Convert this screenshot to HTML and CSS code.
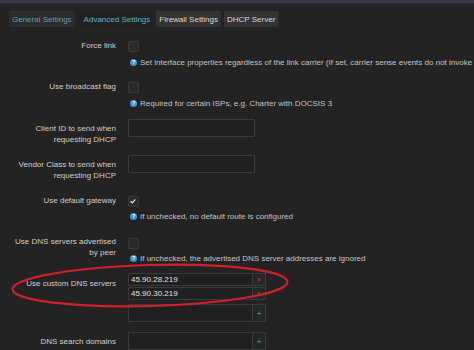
FILE: index.html
```html
<!DOCTYPE html>
<html>
<head>
<meta charset="utf-8">
<link rel="stylesheet" href="styles.css">
</head>
<body>
<div class="topbar"></div>
<div class="tabs">
  <span class="tab tab-general">General Settings</span>
  <span class="tab tab-active">Advanced Settings</span>
  <span class="tab">Firewall Settings</span>
  <span class="tab">DHCP Server</span>
</div>
<div class="form">
  <div class="row r1">
    <div class="label">Force link</div>
    <div class="field">
      <span class="cb"></span>
      <div class="help"><span class="q">?</span>Set interface properties regardless of the link carrier (If set, carrier sense events do not invoke hotplug handlers).</div>
    </div>
  </div>
  <div class="row r2">
    <div class="label">Use broadcast flag</div>
    <div class="field">
      <span class="cb"></span>
      <div class="help"><span class="q">?</span>Required for certain ISPs, e.g. Charter with DOCSIS 3</div>
    </div>
  </div>
  <div class="row r3">
    <div class="label tall">Client ID to send when<br>requesting DHCP</div>
    <div class="field"><div class="input"></div></div>
  </div>
  <div class="row r4">
    <div class="label tall">Vendor Class to send when<br>requesting DHCP</div>
    <div class="field"><div class="input"></div></div>
  </div>
  <div class="row r5">
    <div class="label">Use default gateway</div>
    <div class="field">
      <span class="cb checked"><svg viewBox="0 0 10 10" width="10" height="10"><path d="M2.6 5.2 L4.3 6.8 L7.4 3.4" fill="none" stroke="#e6e6e6" stroke-width="1.2"/></svg></span>
      <div class="help"><span class="q">?</span>If unchecked, no default route is configured</div>
    </div>
  </div>
  <div class="row r6">
    <div class="label">Use DNS servers advertised<br>by peer</div>
    <div class="field">
      <span class="cb cb2"></span>
      <div class="help"><span class="q">?</span>If unchecked, the advertised DNS server addresses are ignored</div>
    </div>
  </div>
  <div class="row r7">
    <div class="label tall5">Use custom DNS servers</div>
    <div class="field">
      <div class="dyn item"><span class="val">45.90.28.219</span><span class="btn rm">×</span></div>
      <div class="dyn item"><span class="val">45.90.30.219</span><span class="btn rm">×</span></div>
      <div class="dyn add"><span class="val"></span><span class="btn plus">+</span></div>
    </div>
  </div>
  <div class="row r8">
    <div class="label tall">DNS search domains</div>
    <div class="field">
      <div class="dyn add first"><span class="val"></span><span class="btn plus">+</span></div>
    </div>
  </div>
</div>
<svg class="mark" width="474" height="350" viewBox="0 0 474 350">
  <ellipse cx="150" cy="285.5" rx="137.5" ry="20.5" transform="rotate(-1.6 150 285.5)" fill="none" stroke="#d3202b" stroke-width="2.2"/>
</svg>
</body>
</html>
```
FILE: styles.css
```css
html, body {
  margin: 0;
  padding: 0;
  background: #232323;
  width: 474px;
  height: 350px;
  overflow: hidden;
  font-family: "Liberation Sans", Arial, sans-serif;
  font-size: 8px;
  color: #cfcfcf;
}
.topbar {
  height: 3px;
  background: #3a3843;
  border-bottom: 1px solid #2b2a30;
}
.tabs {
  display: flex;
  gap: 3px;
  margin: 7px 0 0 9px;
  height: 16px;
}
.tab {
  display: flex;
  align-items: center;
  padding: 0 3px;
  background: #333;
  color: #dcdcdc;
  white-space: nowrap;
  border-radius: 1px;
}
.tab-general {
  background: #2c2c2c;
  color: #5aa3b6;
  padding: 0 3px 0 3px;
  margin-right: 2px;
}
.tab-active {
  background: #212121;
  color: #62b0c4;
  padding: 0 3px 0 4px;
}
.form {
  white-space: nowrap;
}
.row {
  display: grid;
  grid-template-columns: 116px 1fr;
  column-gap: 12px;
}
.label {
  text-align: right;
  line-height: 11px;
  color: #cfcfcf;
}
.label.tall { padding-top: 4px; }
.label.tall5 { padding-top: 5px; }
.r1 { margin-top: 13px; }
.r2 { margin-top: 13px; }
.r3 { margin-top: 10px; }
.r4 { margin-top: 10px; }
.r5 { margin-top: 14px; }
.r6 { margin-top: 14px; }
.r7 { margin-top: 9px; }
.r8 { margin-top: 10px; }
.field {
  display: flex;
  flex-direction: column;
  align-items: flex-start;
  min-width: 0;
}
.cb {
  display: block;
  width: 9px;
  height: 9px;
  margin-top: 1px;
  background: #2a2a2a;
  border: 1px solid #393939;
  border-radius: 2px;
}
.cb.cb2 { margin-top: 2px; }
.cb svg { display: block; margin: -1px 0 0 -1px; }
.help {
  margin-top: 5px;
  line-height: 11px;
  color: #c4c4c4;
  display: flex;
  align-items: center;
}
.r5 .help, .r6 .help { margin-top: 4px; }
.q {
  display: inline-flex;
  align-items: center;
  justify-content: center;
  width: 7px;
  height: 7px;
  border-radius: 50%;
  background: #3b96d2;
  color: #fff;
  font-size: 6px;
  font-weight: bold;
  margin: 0 3px 0 2px;
  line-height: 7px;
}
.input {
  width: 125px;
  height: 16px;
  background: #202020;
  border: 1px solid #3c3c3c;
  border-radius: 1px;
}
.dyn {
  display: flex;
  width: 138px;
}
.dyn .val {
  flex: 1;
  background: #202020;
  border: 1px solid #3a3a3a;
  border-right: none;
  color: #e0e0e0;
  padding-left: 2px;
  display: flex;
  align-items: center;
  font-size: 8px;
}
.dyn .btn {
  width: 12px;
  background: #262626;
  border: 1px solid #3a3a3a;
  display: flex;
  align-items: center;
  justify-content: center;
  font-size: 7px;
}
.dyn.item { height: 13px; margin-bottom: 1px; }
.dyn.add { height: 18px; margin-top: 3px; }
.dyn.add.first { margin-top: 0; }
.btn.rm { color: #c0455a; }
.btn.plus { color: #2a9a6c; font-weight: bold; }
.mark {
  position: absolute;
  left: 0;
  top: 0;
  pointer-events: none;
}
```
